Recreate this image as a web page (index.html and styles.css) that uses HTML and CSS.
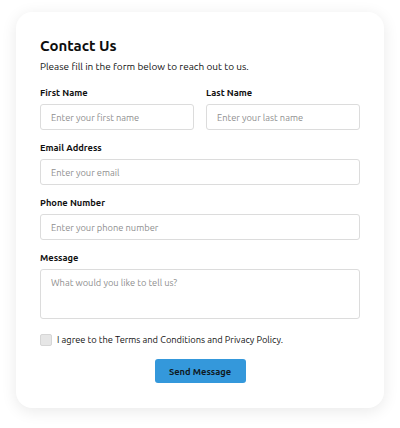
FILE: index.html
```html
<!DOCTYPE html>
<html lang="en">
<head>
<meta charset="utf-8">
<title>Contact Us</title>
<link rel="stylesheet" href="styles.css">
</head>
<body>
<div class="page">
  <div class="card">
    <h1 class="title">Contact Us</h1>
    <p class="subtitle">Please fill in the form below to reach out to us.</p>
    <form class="form">
      <div class="row">
        <div class="field">
          <label class="label" for="fn">First Name</label>
          <input class="input" id="fn" type="text" placeholder="Enter your first name">
        </div>
        <div class="field">
          <label class="label" for="ln">Last Name</label>
          <input class="input" id="ln" type="text" placeholder="Enter your last name">
        </div>
      </div>
      <div class="field">
        <label class="label" for="em">Email Address</label>
        <input class="input" id="em" type="email" placeholder="Enter your email">
      </div>
      <div class="field">
        <label class="label" for="ph">Phone Number</label>
        <input class="input" id="ph" type="tel" placeholder="Enter your phone number">
      </div>
      <div class="field">
        <label class="label" for="msg">Message</label>
        <textarea class="input textarea" id="msg" placeholder="What would you like to tell us?"></textarea>
      </div>
      <div class="agree">
        <span class="checkbox"></span>
        <span class="agree-text">I agree to the Terms and Conditions and Privacy Policy.</span>
      </div>
      <div class="actions">
        <button class="btn" type="button">Send Message</button>
      </div>
    </form>
  </div>
</div>
</body>
</html>
```

FILE: styles.css
```css
html, body {
  margin: 0;
  padding: 0;
  background: #ffffff;
}
body {
  font-family: "Ubuntu", "Noto Sans", "Open Sans", sans-serif;
  color: #111111;
}
.page {
  padding: 12px 16px 20px;
}
.card {
  background: #ffffff;
  border-radius: 16px;
  box-shadow: 0 3px 16px rgba(0, 0, 0, 0.09);
  padding: 24px 24px 25px;
}
.title {
  margin: 0;
  font-size: 15px;
  line-height: 20px;
  font-weight: 700;
  color: #0d0d0d;
}
.subtitle {
  margin: 4px 0 13px;
  font-size: 10px;
  line-height: 13px;
  color: #111111;
}
.form {
  display: flex;
  flex-direction: column;
  gap: 11px;
}
.row {
  display: grid;
  grid-template-columns: 1fr 1fr;
  gap: 12px;
}
.field {
  display: flex;
  flex-direction: column;
}
.label {
  font-size: 9.3px;
  line-height: 13px;
  font-weight: 700;
  color: #111111;
  margin-bottom: 5px;
}
.input {
  box-sizing: border-box;
  width: 100%;
  height: 26px;
  border: 1px solid #dcdcdc;
  border-radius: 3px;
  padding: 0 10px;
  font-family: inherit;
  font-size: 9.3px;
  color: #222222;
  background: #ffffff;
  outline: none;
}
.input::placeholder {
  color: #8f8f8f;
}
.textarea {
  height: 50px;
  padding: 7px 10px;
  resize: none;
  display: block;
}
.agree {
  margin-top: 3px;
  display: flex;
  align-items: center;
  gap: 5px;
  height: 14px;
}
.checkbox {
  box-sizing: border-box;
  width: 12px;
  height: 12px;
  background: #e6e6e6;
  border: 1px solid #d6d6d6;
  border-radius: 2px;
}
.agree-text {
  font-size: 9.3px;
  line-height: 14px;
  color: #111111;
}
.actions {
  margin-top: 1px;
  display: flex;
  justify-content: center;
}
.btn {
  box-sizing: border-box;
  width: 91px;
  height: 24px;
  border: none;
  border-radius: 3px;
  background: #3498db;
  color: #0f1a24;
  font-family: inherit;
  font-size: 9.3px;
  font-weight: 700;
  padding: 0;
}
```
